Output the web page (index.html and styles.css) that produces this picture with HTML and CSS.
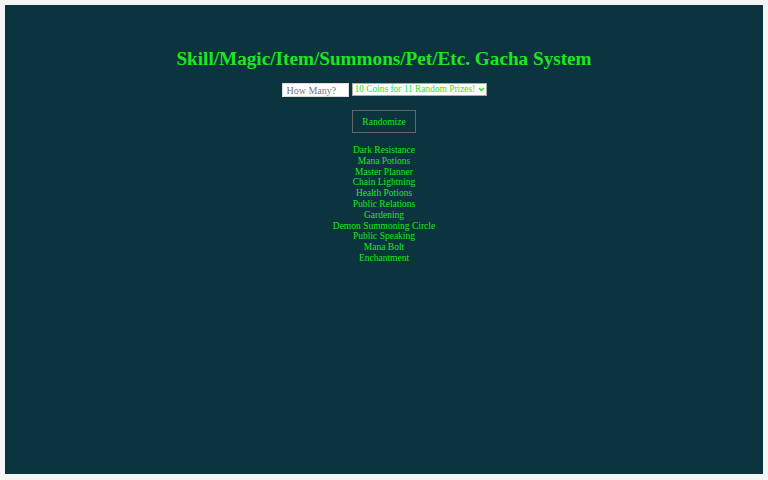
FILE: index.html
```html
<!DOCTYPE html>
<html>
<head>
  <meta charset="utf-8">
  <title>Gacha System</title>
  <link rel="stylesheet" href="styles.css">
</head>
<body>
  <div class="wrapper">
    <h1 class="title">Skill/Magic/Item/Summons/Pet/Etc. Gacha System</h1>
    <div class="controls">
      <input class="amount" type="text" placeholder="How Many?">
      <div class="deal-box">
        <select class="deal">
          <option>10 Coins for 11 Random Prizes!</option>
          <option>1 Coin for 1 Random Prize</option>
        </select>
        <!-- little chevron for the dropdown -->
        <svg class="chevron" width="7" height="5" viewBox="0 0 7 5">
          <path d="M1 1 L3.5 3.5 L6 1" fill="none" stroke="#1ee61e" stroke-width="1.4"/>
        </svg>
      </div>
    </div>
    <button class="roll">Randomize</button>
    <ul class="results">
      <li>Dark Resistance</li>
      <li>Mana Potions</li>
      <li>Master Planner</li>
      <li>Chain Lightning</li>
      <li>Health Potions</li>
      <li>Public Relations</li>
      <li>Gardening</li>
      <li>Demon Summoning Circle</li>
      <li>Public Speaking</li>
      <li>Mana Bolt</li>
      <li>Enchantment</li>
    </ul>
  </div>
</body>
</html>
```

FILE: styles.css
```css
body {
  margin: 5px;
  background-color: #f4f6f6;
  font-family: "Liberation Serif", serif;
}

.wrapper {
  height: 469px;
  background-color: #0c343e;
  color: #1ee61e;
  text-align: center;
  padding-top: 1px;
  box-sizing: border-box;
}

.title {
  font-size: 19.2px;
  margin: 42px 0 13px 0;
}

.controls {
  display: flex;
  justify-content: center;
  align-items: flex-start;
  gap: 3px;
}

.amount {
  width: 67px;
  height: 14px;
  box-sizing: border-box;
  border: 1px solid #ddd;
  padding: 0 4px;
  font-family: "Liberation Serif", serif;
  font-size: 10px;
  color: #555;
  background: #fff;
}

.amount::placeholder {
  color: #777;
}

.deal-box {
  position: relative;
  height: 13px;
}

.deal {
  display: block;
  box-sizing: border-box;
  appearance: none;
  -webkit-appearance: none;
  width: 135px;
  height: 13px;
  margin: 0;
  border: 1px solid #aaa;
  border-radius: 0;
  padding: 0 0 0 2px;
  font-family: "Liberation Serif", serif;
  font-size: 9.4px;
  line-height: 11px;
  color: #1ee61e;
  background: #fff;
}

.chevron {
  position: absolute;
  right: 2px;
  top: 4px;
  pointer-events: none;
}

.roll {
  margin-top: 13px;
  width: 64px;
  height: 23px;
  background: transparent;
  border: 1px solid #666;
  color: #1ee61e;
  font-family: "Liberation Serif", serif;
  font-size: 9.5px;
}

.results {
  list-style: none;
  margin: 12px 0 0 0;
  padding: 0;
  font-size: 9.5px;
  line-height: 10.8px;
}
```
